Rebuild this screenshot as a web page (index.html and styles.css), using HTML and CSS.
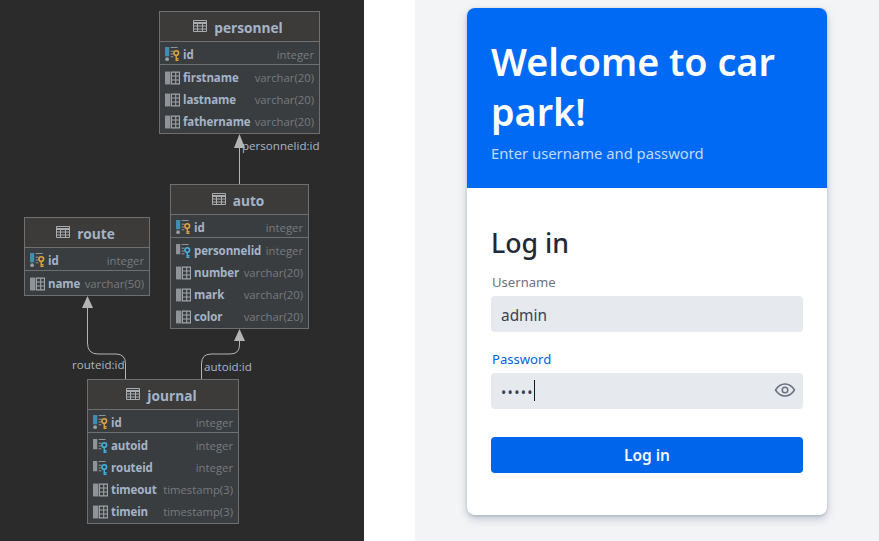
FILE: index.html
```html
<!DOCTYPE html>
<html lang="en">
<head>
<meta charset="utf-8">
<title>Car park</title>
<link rel="stylesheet" href="styles.css">
</head>
<body>
<svg class="defs" width="0" height="0">
  <symbol id="tbl" viewBox="0 0 14 12">
    <path d="M.5.5h13v11H.5z" fill="none" stroke="#a8adb2"/>
    <path d="M.5 3h13" stroke="#a8adb2" stroke-width="2"/>
    <path d="M.5 6h13M.5 9h13M4.500 3v8.500M9.500 3v8.500" stroke="#a8adb2" fill="none"/>
  </symbol>
  <symbol id="col" viewBox="0 0 14 12">
    <path d="M0 0h5v12H0z" fill="#8f9499"/>
    <path d="M6 .5h7.500v11H6zM6 4.200h7.500M6 7.800h7.500M10 .5v11" stroke="#a0a5aa" fill="none"/>
  </symbol>
  <symbol id="pk" viewBox="0 0 16 15">
    <path d="M0 0h4.500v10H0z" fill="#3f8fb0"/>
    <circle cx="2.200" cy="13" r="2" fill="#9aa0a6"/>
    <path d="M6 .5h7.500M6 4.500h3M6 7.500h3M6 10.500h3" stroke="#9aa0a6" fill="none"/>
    <circle cx="12" cy="6.500" r="2.500" fill="none" stroke="#e0a33a" stroke-width="1.700"/>
    <path d="M12 9v6M12 12.500h2.500M12 14.500h2.500" stroke="#e0a33a" stroke-width="1.500" fill="none"/>
  </symbol>
  <symbol id="fk" viewBox="0 0 16 15">
    <path d="M0 0h4.500v11H0z" fill="#8f9499"/>
    <path d="M6 .5h7.500M6 4.500h3M6 7.500h3M6 10.500h3" stroke="#9aa0a6" fill="none"/>
    <circle cx="12" cy="6.500" r="2.500" fill="none" stroke="#3fb4e0" stroke-width="1.700"/>
    <path d="M12 9v6M12 12.500h2.500M12 14.500h2.500" stroke="#3fb4e0" stroke-width="1.500" fill="none"/>
  </symbol>
</svg>
<div class="app">
  <section class="diagram">
    <svg class="edges" width="364" height="541">
      <g fill="none" stroke="#b4b4b4">
        <path d="M239.500 148V184"/>
        <path d="M87.500 307V343Q87.500 354 98 354H116Q125.500 354 125.500 364V380"/>
        <path d="M201.500 380V364Q201.500 354 211 354H230Q239.500 354 239.500 345V340"/>
      </g>
      <g fill="#b4b4b4">
        <path d="M239.500 134L245 148H234z"/>
        <path d="M87.500 296L93 308H82z"/>
        <path d="M239.500 329L245 341H234z"/>
      </g>
    </svg>
    <span class="edge-label label-personnel">personnelid:id</span>
    <span class="edge-label label-route">routeid:id</span>
    <span class="edge-label label-auto">autoid:id</span>

    <div class="node node-personnel">
      <div class="node-head"><svg class="head-icon"><use href="#tbl"/></svg>personnel</div>
      <div class="pk-row row"><svg class="icon"><use href="#pk"/></svg><b>id</b><i>integer</i></div>
      <div class="cols">
        <div class="row"><svg class="icon"><use href="#col"/></svg><b>firstname</b><i>varchar(20)</i></div>
        <div class="row"><svg class="icon"><use href="#col"/></svg><b>lastname</b><i>varchar(20)</i></div>
        <div class="row"><svg class="icon"><use href="#col"/></svg><b>fathername</b><i>varchar(20)</i></div>
      </div>
    </div>

    <div class="node node-auto">
      <div class="node-head"><svg class="head-icon"><use href="#tbl"/></svg>auto</div>
      <div class="pk-row row"><svg class="icon"><use href="#pk"/></svg><b>id</b><i>integer</i></div>
      <div class="cols">
        <div class="row"><svg class="icon"><use href="#fk"/></svg><b>personnelid</b><i>integer</i></div>
        <div class="row"><svg class="icon"><use href="#col"/></svg><b>number</b><i>varchar(20)</i></div>
        <div class="row"><svg class="icon"><use href="#col"/></svg><b>mark</b><i>varchar(20)</i></div>
        <div class="row"><svg class="icon"><use href="#col"/></svg><b>color</b><i>varchar(20)</i></div>
      </div>
    </div>

    <div class="node node-route">
      <div class="node-head"><svg class="head-icon"><use href="#tbl"/></svg>route</div>
      <div class="pk-row row"><svg class="icon"><use href="#pk"/></svg><b>id</b><i>integer</i></div>
      <div class="cols">
        <div class="row"><svg class="icon"><use href="#col"/></svg><b>name</b><i>varchar(50)</i></div>
      </div>
    </div>

    <div class="node node-journal">
      <div class="node-head"><svg class="head-icon"><use href="#tbl"/></svg>journal</div>
      <div class="pk-row row"><svg class="icon"><use href="#pk"/></svg><b>id</b><i>integer</i></div>
      <div class="cols">
        <div class="row"><svg class="icon"><use href="#fk"/></svg><b>autoid</b><i>integer</i></div>
        <div class="row"><svg class="icon"><use href="#fk"/></svg><b>routeid</b><i>integer</i></div>
        <div class="row"><svg class="icon"><use href="#col"/></svg><b>timeout</b><i>timestamp(3)</i></div>
        <div class="row"><svg class="icon"><use href="#col"/></svg><b>timein</b><i>timestamp(3)</i></div>
      </div>
    </div>
  </section>

  <main class="login-area">
    <div class="card">
      <header class="card-head">
        <h1>Welcome to car park!</h1>
        <p>Enter username and password</p>
      </header>
      <form class="card-body">
        <h2>Log in</h2>
        <div class="field">
          <div class="field-label">Username</div>
          <div class="field-input">admin</div>
        </div>
        <div class="field">
          <div class="field-label active">Password</div>
          <div class="field-input">
            <span class="dots">•••••</span><span class="caret"></span>
            <svg class="eye" viewBox="0 0 24 24" fill="none" stroke="#6b7280" stroke-width="1.500" stroke-linecap="round" stroke-linejoin="round">
              <circle cx="12" cy="12" r="2.800"/>
              <path d="M2.500 12C5 8 8 6 12 6s7 2 9.500 6c-2.500 4-5.500 6-9.500 6s-7-2-9.500-6z"/>
            </svg>
          </div>
        </div>
        <button class="submit" type="button">Log in</button>
      </form>
    </div>
  </main>
</div>
</body>
</html>
```
FILE: styles.css
```css
* { box-sizing: border-box; }
html, body { margin: 0; padding: 0; height: 100%; overflow: hidden; background: #fff; }
.defs { position: absolute; }
.app { display: flex; height: 541px; width: 879px; }

/* diagram */
.diagram { position: relative; flex: 0 0 364px; background: #2b2b2b; margin-right: 51px; font-family: "Open Sans", "Noto Sans", sans-serif; }
.edges { position: absolute; left: 0; top: 0; }
.edge-label { position: absolute; font: 11.600px/16px "Open Sans", sans-serif; color: #a9b7c6; white-space: nowrap; }
.label-personnel { left: 242px; top: 138px; }
.label-route { left: 72px; top: 357px; }
.label-auto { left: 204px; top: 359px; }

.node { position: absolute; background: #3a3d40; border: 1px solid #6d6f71; }
.node-personnel { left: 159px; top: 11px; width: 161px; }
.node-auto { left: 170px; top: 184px; width: 139px; }
.node-route { left: 24px; top: 217px; width: 126px; }
.node-journal { left: 87px; top: 379px; width: 152px; }

.node-head { height: 30px; display: flex; align-items: center; justify-content: center; gap: 7px; padding: 2px 3px 0 0; background: #3c3b3a; border-bottom: 1px solid #6d6f71; color: #a4b4c8; font-size: 13.700px; font-weight: 700; }
.head-icon { width: 14px; height: 12px; margin-top: -3px; }
.row { height: 22px; display: flex; align-items: center; padding: 0 5px; font-size: 11.500px; line-height: 22px; white-space: nowrap; }
.pk-row { height: 23px; padding-top: 4px; border-bottom: 1px solid #6d6f71; }
.cols { padding-top: 2px; }
.icon { width: 15px; height: 14px; flex: none; margin-right: 3px; }
.pk-row .icon { margin-top: -3px; }
.row b { color: #a4b4c8; font-weight: 700; letter-spacing: -.1px; }
.row i { margin-left: auto; font-style: normal; color: #787b7d; font-size: 11.300px; padding-left: 4px; }

/* login */
.login-area { flex: 1; background: #f3f4f6; padding: 8px 52px 26px; }
.card { width: 360px; height: 507px; background: #fff; border-radius: 8px; overflow: hidden; box-shadow: 0 4px 8px rgba(100,116,139,.35), 0 1px 3px rgba(100,116,139,.3); font-family: "Noto Sans", sans-serif; }
.card-head { height: 180px; background: #006af5; color: #fff; padding: 29px 24px 0; }
.card-head h1 { margin: 0; font-size: 37.700px; line-height: 50px; font-weight: 600; }
.card-head p { margin: 5px 0 0; font-size: 14.800px; line-height: 22px; color: #c3dafe; }
.card-body { padding: 35px 24px 0; display: flex; flex-direction: column; }
.card-body h2 { margin: 0; font-size: 26.700px; line-height: 40px; font-weight: 500; color: #1f2937; }
.field { margin-top: 9px; }
.field + .field { margin-top: 17px; }
.field-label { font-size: 13.100px; line-height: 20px; color: #6b7280; margin-bottom: 4px; padding-left: 1px; }
.field-label.active { color: #0064e6; }
.field-input { position: relative; height: 36px; display: flex; align-items: center; padding: 2px 10px 0; background: #e6e9ee; border-radius: 4px; font-size: 15.400px; color: #374151; }
.dots { font-size: 14px; letter-spacing: 1.300px; }
.caret { width: 1px; height: 21px; background: #111827; margin: -3px 0 0 0; }
.eye { position: absolute; right: 6px; top: 5px; width: 24px; height: 24px; }
.submit { margin-top: 28px; height: 36px; border: 0; border-radius: 4px; background: #0065eb; color: #f3f6fd; font: 600 15.500px "Noto Sans", sans-serif; }
```
